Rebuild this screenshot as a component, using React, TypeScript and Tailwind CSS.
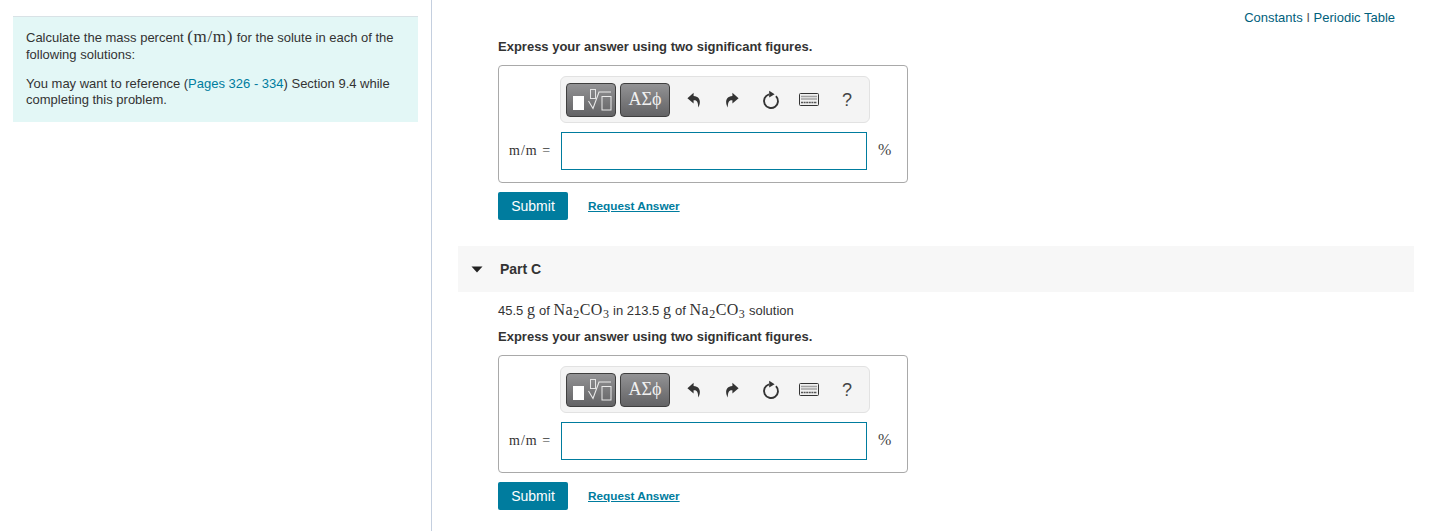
import React from "react";

const sans = "font-['Liberation_Sans',Arial,sans-serif]";
const serif = "font-['Liberation_Serif','Times_New_Roman',serif]";

function Undo({ flip }: { flip?: boolean }) {
  return (
    <svg width="14" height="16" viewBox="0 0 14 16" className={flip ? "-scale-x-100" : ""}>
      <path d="M6.6 0.8 L0.4 6.2 L6.6 11.4 L6.6 8.2 C9.6 8 11.2 9.6 11.2 15.6 C13.6 12 14.4 4.4 6.6 4 Z" fill="#333" />
    </svg>
  );
}

function Reset() {
  return (
    <svg width="18" height="20" viewBox="0 0 18 20">
      <path d="M13.95 6.05 A7 7 0 1 1 7 4.3" fill="none" stroke="#333" strokeWidth="1.9" />
      <path d="M7.2 0.8 L12.6 4.3 L7.2 7.6 Z" fill="#333" />
    </svg>
  );
}

function KeyboardIcon() {
  return (
    <svg width="20" height="13" viewBox="0 0 20 13">
      <rect x="0.5" y="0.5" width="19" height="12" rx="1" fill="#f0f0f0" stroke="#333" />
      <path d="M2.5 3.5H17.5M2.5 6H17.5" stroke="#555" strokeWidth="1.3" strokeDasharray="1 1" />
      <path d="M2 9.5H18" stroke="#555" strokeWidth="1.5" strokeDasharray="2 0.6" />
    </svg>
  );
}

function TemplateIcon() {
  return (
    <svg width="44" height="26" viewBox="0 0 44 26">
      <rect x="4" y="9" width="11" height="14" fill="#fff" />
      <rect x="21.5" y="2.5" width="5" height="9" fill="none" stroke="#e4e4e4" strokeWidth="1" />
      <path d="M19.5 14 L24 21.5 L30 5 H42" fill="none" stroke="#eaeaea" strokeWidth="1.1" />
      <rect x="33" y="9.5" width="9" height="13.5" fill="none" stroke="#eaeaea" strokeWidth="1" />
    </svg>
  );
}

const btn =
  "h-[34px] w-[50px] rounded-[4px] border border-[#3f3f3f] bg-gradient-to-b from-[#939395] to-[#636365] flex items-center justify-center";

function Answer() {
  return (
    <>
      <div className="ml-[40px] w-[410px] h-[118px] border border-[#a9a9a9] rounded-[4px] flex flex-col pl-[10px]">
        <div className="ml-[51px] mt-[10px] w-[310px] h-[47px] bg-[#f4f4f4] border border-[#e2e2e2] rounded-[6px] flex items-center pl-[5px]">
          <div className={btn}>
            <TemplateIcon />
          </div>
          <div className={`ml-[4px] ${btn} text-[#f0f0f0] text-[18px] ${serif}`}>ΑΣϕ</div>
          <div className="ml-[17px] w-[14px] flex justify-center"><Undo /></div>
          <div className="ml-[24px] w-[14px] flex justify-center"><Undo flip /></div>
          <div className="ml-[23px] w-[18px] flex justify-center"><Reset /></div>
          <div className="ml-[19px] w-[20px] flex justify-center"><KeyboardIcon /></div>
          <div className={`ml-[23px] text-[18px] leading-[20px] text-[#444] ${sans}`}>?</div>
        </div>
        <div className="mt-[9px] flex items-center">
          <span className={`text-[14px] tracking-[1px] text-[#333] w-[52px] -translate-y-px ${serif}`}>m/m =</span>
          <div className="w-[306px] h-[38px] border border-[#007c9e] bg-white" />
          <span className={`ml-[11px] text-[16px] text-[#444] -translate-y-px ${serif}`}>%</span>
        </div>
      </div>
      <div className="ml-[40px] mt-[9px] flex items-center">
        <div className={`w-[70px] h-[28px] bg-[#007c9e] rounded-[2px] text-white text-[14px] flex items-center justify-center ${sans}`}>
          Submit
        </div>
        <span className={`ml-[20px] text-[11.75px] font-bold underline text-[#007c9e] ${sans}`}>Request Answer</span>
      </div>
    </>
  );
}

function M({ children }: { children: React.ReactNode }) {
  return <span className={`${serif} text-[16px] tracking-[0.5px]`}>{children}</span>;
}

export default function App() {
  return (
    <div className={`w-[1440px] h-[531px] overflow-hidden bg-white flex text-[13px] text-[#333] ${sans}`}>
      <div className="w-[432px] h-full border-r border-[#c4cfdf] pl-[13px] pt-[16px] shrink-0">
        <div className="w-[405px] h-[106px] bg-[#e3f7f6] border-t border-[#d9e2e6] pl-[13px] pr-[20px] pt-[12px]">
          <p className="leading-[17px]">
            Calculate the mass percent <span className={`${serif} text-[17px] tracking-[0.7px] leading-[16px]`}>(m/m)</span> for the solute in each of the following solutions:
          </p>
          <p className="mt-[13px] leading-[16px]">
            You may want to reference (<span className="text-[#007c9e]">Pages 326 - 334</span>) Section 9.4 while completing this problem.
          </p>
        </div>
      </div>
      <div className="flex-1 min-w-0 pl-[26px]">
        <div className="h-[26px] flex items-end justify-end pr-[45px] text-[#00607c] text-[13px] leading-[16px]">
          <span>Constants</span>
          <span className="text-[#555] mx-[4px] font-light">l</span>
          <span>Periodic Table</span>
        </div>
        <p className="ml-[40px] mt-[13px] font-bold leading-[16px]">Express your answer using two significant figures.</p>
        <div className="mt-[10px]">
          <Answer />
        </div>
        <div className="mt-[26px] w-[956px] h-[46px] bg-[#f7f7f7] flex items-center">
          <svg width="12" height="7" viewBox="0 0 12 7" className="ml-[13px]"><path d="M0.5 0.5H11.5L6 6.5Z" fill="#222" /></svg>
          <span className="ml-[17px] font-bold text-[14px] text-[#333]">Part C</span>
        </div>
        <p className="ml-[40px] mt-[9px] leading-[18px]">
          45.5 <M>g</M> of <M>Na<sub>2</sub>CO<sub>3</sub></M> in 213.5 <M>g</M> of <M>Na<sub>2</sub>CO<sub>3</sub></M> solution
        </p>
        <p className="ml-[40px] mt-[9px] font-bold leading-[16px]">Express your answer using two significant figures.</p>
        <div className="mt-[10px]">
          <Answer />
        </div>
      </div>
    </div>
  );
}
